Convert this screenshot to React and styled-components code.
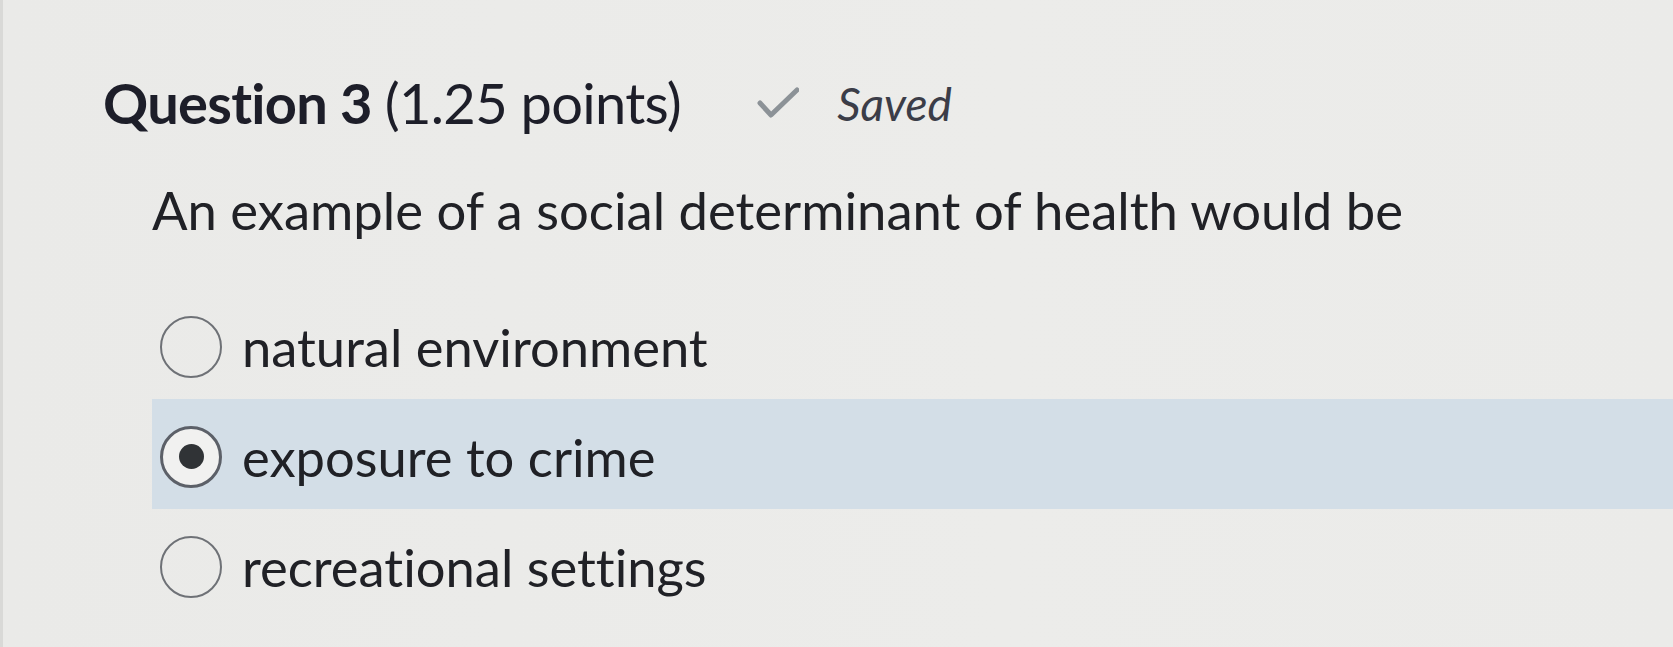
import React from "react";
import styled, { createGlobalStyle } from "styled-components";

const GlobalStyle = createGlobalStyle`
  html, body {
    margin: 0;
    padding: 0;
    background: #ebebe9;
  }
  body {
    font-family: Lato, "Noto Sans", sans-serif;
    font-variant-ligatures: none;
    color: #202124;
  }
`;

const Page = styled.div`
  width: 1673px;
  height: 647px;
  overflow: hidden;
  box-sizing: border-box;
  padding: 68px 0 0 103px;
  background: linear-gradient(90deg, #d9d9d7 0, #d9d9d7 3px, #eaeae8 3px, #ececea 60%, #ebebe9 100%);
`;

const Header = styled.div`
  display: flex;
  align-items: center;
  height: 70px;
`;

const Title = styled.h2`
  margin: 0;
  font-size: 56px;
  line-height: 70px;
  font-weight: 700;
  color: #1d1e29;
  letter-spacing: -0.7px;
`;

const Points = styled.span`
  font-weight: 400;
`;

const SavedTag = styled.div`
  display: flex;
  align-items: center;
  margin-left: 76px;
  gap: 38px;
  font-size: 46px;
  font-style: italic;
  color: #3b3d48;
`;

const Body = styled.div`
  padding-left: 49px;
`;

const Prompt = styled.p`
  margin: 40px 0 0;
  font-size: 52.6px;
  line-height: 64px;
  color: #202126;
`;

const Options = styled.div`
  margin-top: 47px;
  display: flex;
  flex-direction: column;
`;

const Row = styled.label`
  display: flex;
  align-items: center;
  height: 110px;
  box-sizing: border-box;
  padding: 5px 0 0 8px;
  background: ${(p) => (p.$selected ? "#d3dee7" : "transparent")};
  font-size: 52.5px;
  color: #202126;
`;

const Radio = styled.span`
  position: relative;
  flex: none;
  width: 62px;
  height: 62px;
  box-sizing: border-box;
  border-radius: 50%;
  border: ${(p) => (p.$checked ? "3px solid #5c6068" : "2px solid #6e7176")};
  background: ${(p) => (p.$checked ? "#f1f1f0" : "transparent")};
  margin-right: 20px;

  &::after {
    content: "";
    display: ${(p) => (p.$checked ? "block" : "none")};
    position: absolute;
    left: 50%;
    top: 50%;
    width: 25px;
    height: 25px;
    margin: -12.5px 0 0 -12.5px;
    border-radius: 50%;
    background: #303336;
  }
`;

const CheckIcon = () => (
  <svg width="42" height="32" viewBox="0 0 42 32">
    <polyline
      points="3,16 14,28 40,3"
      fill="none"
      stroke="#8c9297"
      strokeWidth="5"
      strokeLinecap="round"
      strokeLinejoin="round"
    />
  </svg>
);

const choices = [
  { label: "natural environment", selected: false },
  { label: "exposure to crime", selected: true },
  { label: "recreational settings", selected: false },
];

export default function App() {
  return (
    <Page>
      <GlobalStyle />
      <Header>
        <Title>
          Question 3 <Points>(1.25 points)</Points>
        </Title>
        <SavedTag>
          <CheckIcon />
          Saved
        </SavedTag>
      </Header>
      <Body>
        <Prompt>An example of a social determinant of health would be</Prompt>
        <Options>
          {choices.map((c) => (
            <Row key={c.label} $selected={c.selected}>
              <Radio $checked={c.selected} />
              {c.label}
            </Row>
          ))}
        </Options>
      </Body>
    </Page>
  );
}
